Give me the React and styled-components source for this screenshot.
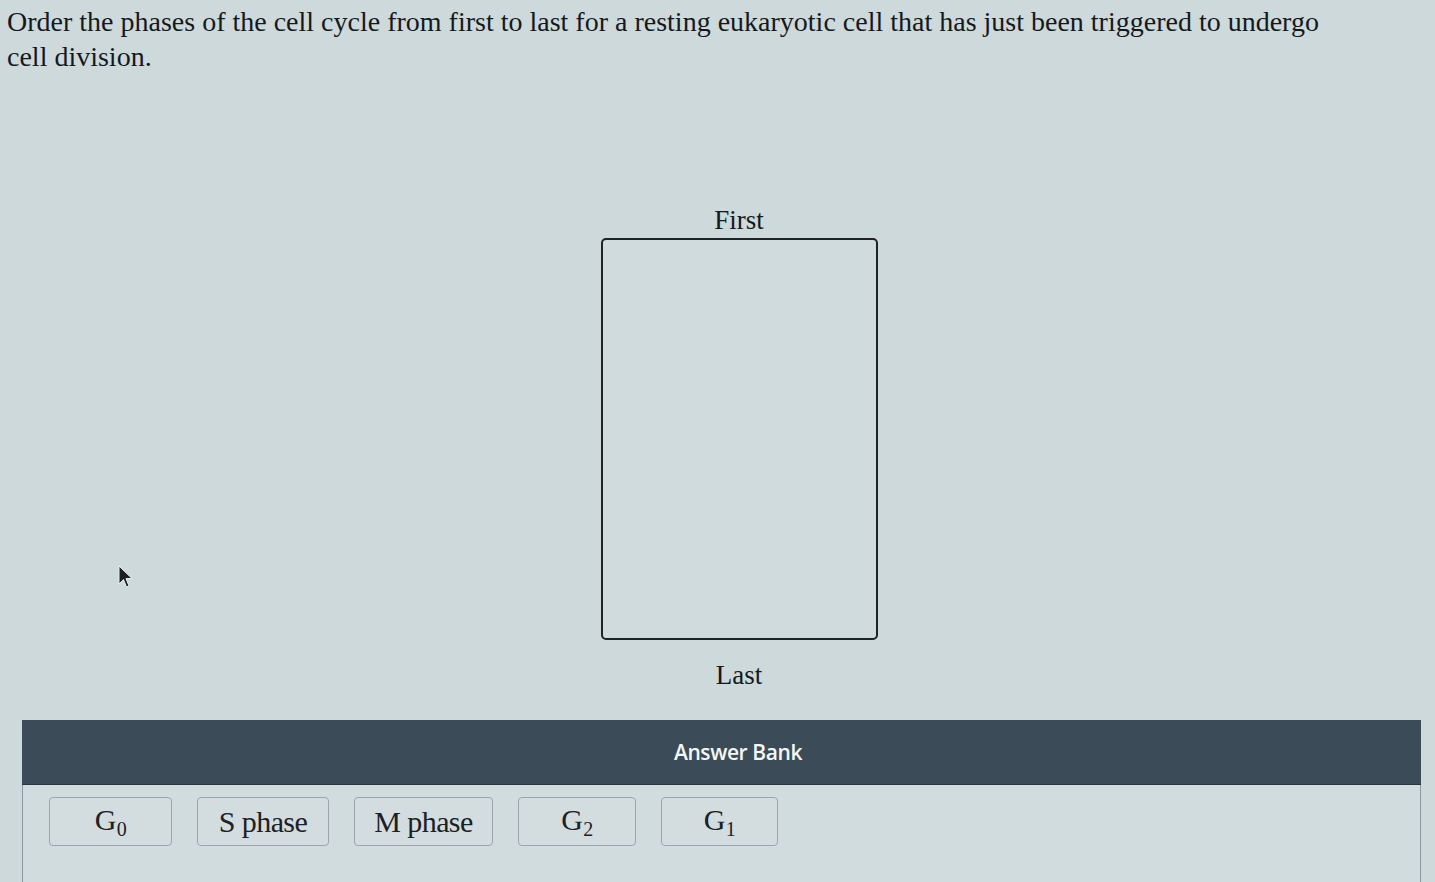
import React from 'react'
import styled, { createGlobalStyle } from 'styled-components'

const GlobalStyles = createGlobalStyle`
  * {
    margin: 0;
    padding: 0;
    box-sizing: border-box;
  }
  html, body {
    background: #cdd9db;
    height: 100%;
    overflow: hidden;
  }
  #root {
    min-height: 100%;
  }
`

const answers = [
  { id: 'g0', label: 'G', sub: '0', width: 123 },
  { id: 's', label: 'S phase', width: 132 },
  { id: 'm', label: 'M phase', width: 139 },
  { id: 'g2', label: 'G', sub: '2', width: 118 },
  { id: 'g1', label: 'G', sub: '1', width: 117 },
]

const Cursor = () => (
  <CursorMark width="18" height="24" viewBox="0 0 18 24">
    <path d="M2 1 L2 19 L6.5 14.5 L9.5 22 L12 21 L9 13.5 L15 13.5 Z" fill="#1c1f22" stroke="#e8eef0" strokeWidth="1" />
  </CursorMark>
)

const App = () => {
  return (
    <>
      <GlobalStyles />
      <Page>
        <Question>
          Order the phases of the cell cycle from first to last for a resting eukaryotic cell that has just been triggered to undergo cell division.
        </Question>
        <Ranking>
          <RankLabel>First</RankLabel>
          <DropZone />
          <RankLabel $bottom>Last</RankLabel>
        </Ranking>
        <Bank>
          <BankHeader>Answer Bank</BankHeader>
          <BankBody>
            {answers.map((a) => (
              <Chip key={a.id} $w={a.width}>
                <span>
                  {a.label}
                  {a.sub && <Sub>{a.sub}</Sub>}
                </span>
              </Chip>
            ))}
          </BankBody>
        </Bank>
        <Cursor />
      </Page>
    </>
  )
}

export default App

const Page = styled.div`
  position: relative;
  display: flex;
  flex-direction: column;
  padding-top: 4px;
  font-family: 'Liberation Serif', 'Times New Roman', serif;
  color: #15191c;
`

const Question = styled.p`
  width: 1330px;
  padding-left: 7px;
  font-size: 28px;
  line-height: 35px;
  color: #15191c;
`

const Ranking = styled.div`
  display: flex;
  flex-direction: column;
  align-items: center;
  margin-top: 131px;
  margin-left: 43px;
`

const RankLabel = styled.div`
  font-size: 27px;
  line-height: 30px;
  margin-bottom: ${(p) => (p.$bottom ? '0' : '3px')};
  margin-top: ${(p) => (p.$bottom ? '20px' : '0')};
`

const DropZone = styled.div`
  width: 277px;
  height: 402px;
  border: 2px solid #1d2226;
  border-radius: 5px;
  background: #cfdbdd;
`

const Bank = styled.section`
  display: flex;
  flex-direction: column;
  margin: 30px 14px 0 22px;
`

const BankHeader = styled.div`
  height: 65px;
  display: flex;
  align-items: center;
  justify-content: center;
  padding-left: 33px;
  background: #3b4b57;
  color: #f4f7f8;
  font-family: 'Open Sans', 'Liberation Sans', sans-serif;
  font-weight: 600;
  font-size: 21px;
  letter-spacing: -0.4px;
  border-bottom: 1px solid #2a3640;
`

const BankBody = styled.div`
  display: flex;
  align-items: flex-start;
  gap: 25px;
  padding: 12px 26px 40px;
  background: #d1dcde;
  border-left: 1px solid #8d999f;
  border-right: 1px solid #8d999f;
`

const Chip = styled.div`
  width: ${(p) => p.$w}px;
  height: 49px;
  display: flex;
  align-items: center;
  justify-content: center;
  border: 1.5px solid #9ba6ab;
  border-radius: 4px;
  background: #d3dddf;
  font-size: 30px;
  line-height: 1;
  color: #1c2125;
  letter-spacing: -0.6px;
`

const Sub = styled.sub`
  font-size: 20px;
  vertical-align: -6px;
  margin-left: 1px;
`

const CursorMark = styled.svg`
  position: absolute;
  left: 117px;
  top: 565px;
`
